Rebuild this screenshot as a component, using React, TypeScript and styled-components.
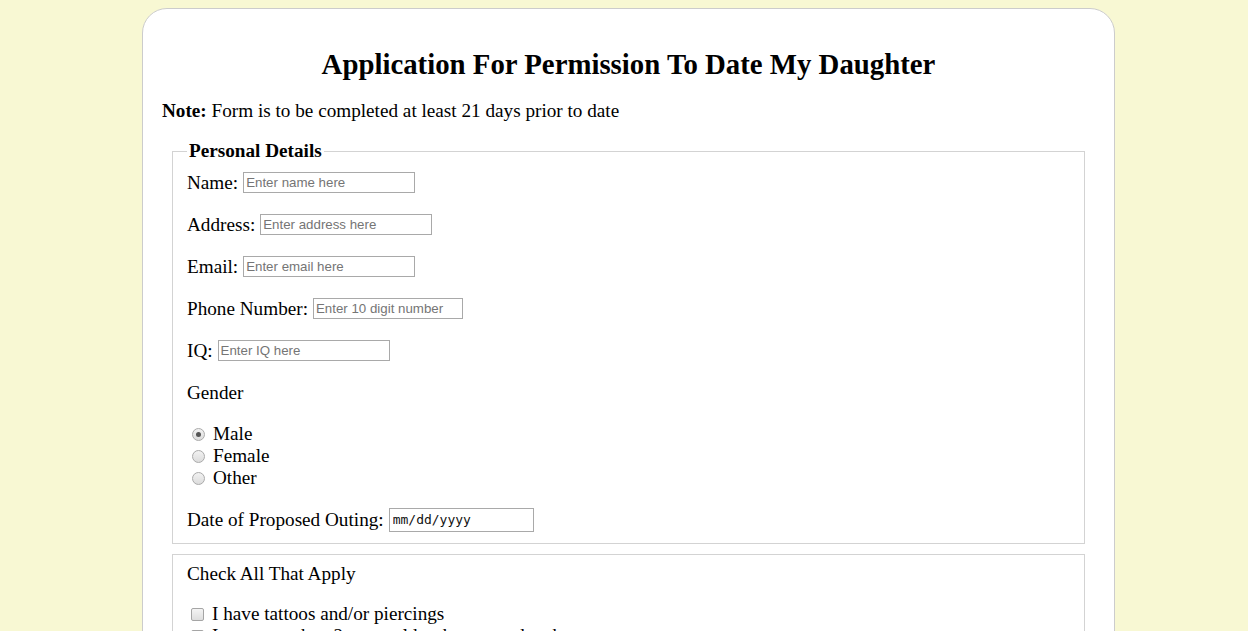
import React from 'react';
import styled, { createGlobalStyle } from 'styled-components';

const GlobalStyle = createGlobalStyle`
  body {
    margin: 8px;
    background: #f8f8d3;
    font-family: 'Liberation Serif', 'Times New Roman', serif;
    color: #000;
  }
`;

const Card = styled.div`
  margin-left: 134px;
  width: 973px;
  min-height: 700px;
  background: #fff;
  border: 1px solid #cccccc;
  border-radius: 25px;
  padding: 39px 19px 0 19px;
  box-sizing: border-box;
`;

const Title = styled.h1`
  margin: 0;
  text-align: center;
  font-size: 28.8px;
  line-height: 33px;
  font-weight: bold;
`;

const Note = styled.p`
  margin: 18px 0 18px;
  font-size: 19.2px;
  line-height: 23px;
`;

const Fieldset = styled.fieldset<{ $top?: number; $gap?: number }>`
  margin: 0 10px 10px;
  padding: ${p => p.$top ?? 9}px 14px 12px;
  border: 1px solid #d3d3d3;
  display: flex;
  flex-direction: column;
  gap: ${p => p.$gap ?? 19}px;
  font-size: 19.2px;
`;

const Legend = styled.legend`
  padding: 0 2px;
  font-size: 19.2px;
  font-weight: bold;
  line-height: 22px;
`;

const Row = styled.div`
  display: flex;
  align-items: center;
  height: 23px;
  line-height: 23px;
  white-space: pre;
`;

const TextInput = styled.input<{ $w?: number }>`
  width: ${p => p.$w ?? 172}px;
  height: 21px;
  box-sizing: border-box;
  margin: 0 0 0 5px;
  padding: 1px 2px;
  border: 1px solid #a9a9a9;
  font-family: 'Liberation Sans', Arial, sans-serif;
  font-size: 13.3px;
  outline: none;

  &::placeholder {
    color: #757575;
  }
`;

const DateInput = styled(TextInput)`
  height: 24px;
  font-family: 'DejaVu Sans Mono', 'Liberation Mono', monospace;
  font-size: 13px;
  color: #111;
  padding: 1px 3px;
`;

const Choices = styled.div`
  display: flex;
  flex-direction: column;
`;

const Choice = styled.label`
  display: flex;
  align-items: center;
  height: 22px;
  line-height: 22px;
`;

const Radio = styled.input`
  appearance: none;
  width: 13px;
  height: 13px;
  margin: 0 8px 0 5px;
  border-radius: 50%;
  border: 1px solid #aaaaaa;
  background: linear-gradient(#f2f2f2, #dcdcdc);
  box-sizing: border-box;
  position: relative;

  &:checked::after {
    content: '';
    position: absolute;
    left: 3px;
    top: 3px;
    width: 5px;
    height: 5px;
    border-radius: 50%;
    background: #555;
  }
`;

const Checkbox = styled.input`
  appearance: none;
  width: 13px;
  height: 13px;
  margin: 0 8px 0 4px;
  border-radius: 2px;
  border: 1px solid #a5a5a5;
  background: linear-gradient(#f4f4f4, #dedede);
  box-sizing: border-box;
`;

const Personal = () => (
  <Fieldset>
    <Legend>Personal Details</Legend>
    <Row>Name:<TextInput placeholder="Enter name here" /></Row>
    <Row>Address:<TextInput placeholder="Enter address here" /></Row>
    <Row>Email:<TextInput placeholder="Enter email here" /></Row>
    <Row>Phone Number:<TextInput $w={150} placeholder="Enter 10 digit number" /></Row>
    <Row>IQ:<TextInput placeholder="Enter IQ here" /></Row>
    <Row>Gender</Row>
    <Choices>
      <Choice><Radio type="radio" name="gender" defaultChecked />Male</Choice>
      <Choice><Radio type="radio" name="gender" />Female</Choice>
      <Choice><Radio type="radio" name="gender" />Other</Choice>
    </Choices>
    <Row>Date of Proposed Outing:<DateInput $w={145} defaultValue="mm/dd/yyyy" /></Row>
  </Fieldset>
);

const Checks = () => (
  <Fieldset $top={7} $gap={18}>
    <Row>Check All That Apply</Row>
    <Choices>
      <Choice><Checkbox type="checkbox" />I have tattoos and/or piercings</Choice>
      <Choice><Checkbox type="checkbox" />I am more than 2 years older than your daughter</Choice>
      <Choice><Checkbox type="checkbox" />I own a motorcycle</Choice>
    </Choices>
  </Fieldset>
);

export default function App() {
  return (
    <>
      <GlobalStyle />
      <Card>
        <Title>Application For Permission To Date My Daughter</Title>
        <Note><b>Note:</b> Form is to be completed at least 21 days prior to date</Note>
        <Personal />
        <Checks />
      </Card>
    </>
  );
}
